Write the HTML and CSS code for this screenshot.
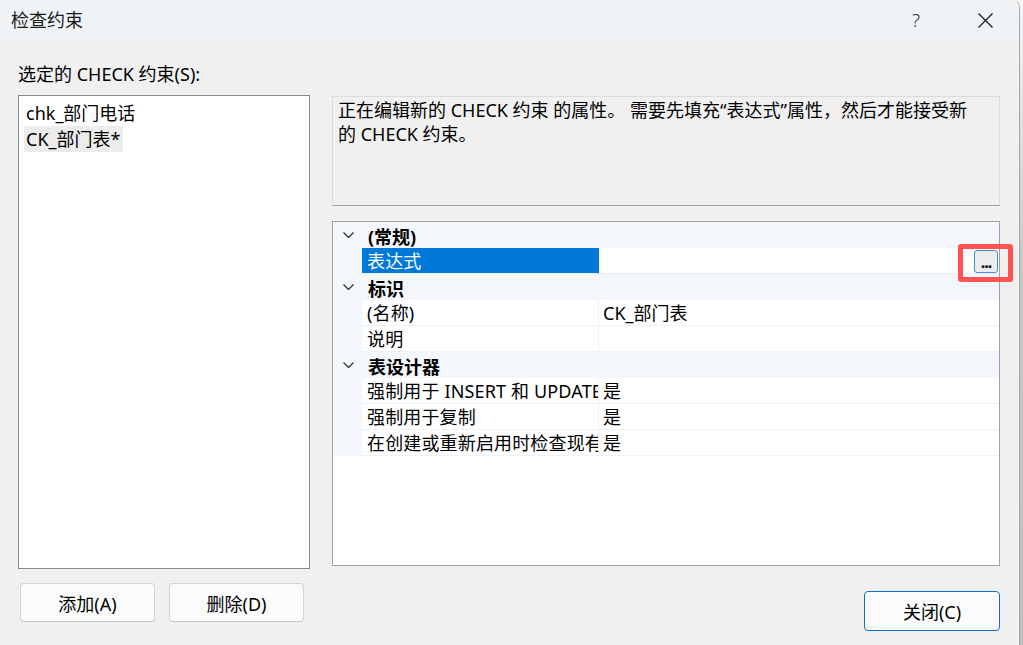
FILE: index.html
```html
<!DOCTYPE html>
<html lang="zh-CN">
<head>
<meta charset="utf-8">
<title>检查约束</title>
<link rel="stylesheet" href="styles.css">
</head>
<body>
<div class="window">
  <div class="titlebar">
    <span class="title">检查约束</span>
    <span class="tb-btn help">?</span>
    <span class="tb-btn close">
      <svg width="15" height="15" viewBox="0 0 15 15"><path d="M0.5 0.5 L14.5 14.5 M14.5 0.5 L0.5 14.5" stroke="#1a1a1a" stroke-width="1.3" fill="none"/></svg>
    </span>
  </div>
  <div class="content">
    <div class="left">
      <div class="label">选定的 CHECK 约束(S):</div>
      <div class="list">
        <div class="item">chk_部门电话</div>
        <div class="item sel">CK_部门表*</div>
      </div>
      <div class="btnrow">
        <button class="btn">添加(A)</button>
        <button class="btn">删除(D)</button>
      </div>
    </div>
    <div class="right">
      <div class="desc">正在编辑新的 CHECK 约束 的属性。 需要先填充“表达式”属性，然后才能接受新<br>的 CHECK 约束。</div>
      <div class="grid">
        <div class="cat">
          <svg class="chev" width="11" height="6" viewBox="0 0 11 6"><polyline points="0.5,0.5 5.5,5.5 10.5,0.5" stroke="#333" stroke-width="1.3" fill="none"/></svg>
          <span class="cat-name">(常规)</span>
        </div>
        <div class="prop">
          <div class="gutter"></div>
          <div class="name selected">表达式</div>
          <div class="value"><span class="ellipsis">...</span></div>
        </div>
        <div class="cat">
          <svg class="chev" width="11" height="6" viewBox="0 0 11 6"><polyline points="0.5,0.5 5.5,5.5 10.5,0.5" stroke="#333" stroke-width="1.3" fill="none"/></svg>
          <span class="cat-name">标识</span>
        </div>
        <div class="prop">
          <div class="gutter"></div>
          <div class="name">(名称)</div>
          <div class="value">CK_部门表</div>
        </div>
        <div class="prop">
          <div class="gutter"></div>
          <div class="name">说明</div>
          <div class="value"></div>
        </div>
        <div class="cat">
          <svg class="chev" width="11" height="6" viewBox="0 0 11 6"><polyline points="0.5,0.5 5.5,5.5 10.5,0.5" stroke="#333" stroke-width="1.3" fill="none"/></svg>
          <span class="cat-name">表设计器</span>
        </div>
        <div class="prop">
          <div class="gutter"></div>
          <div class="name">强制用于 INSERT 和 UPDATE</div>
          <div class="value">是</div>
        </div>
        <div class="prop">
          <div class="gutter"></div>
          <div class="name">强制用于复制</div>
          <div class="value">是</div>
        </div>
        <div class="prop">
          <div class="gutter"></div>
          <div class="name">在创建或重新启用时检查现有数据</div>
          <div class="value">是</div>
        </div>
        <div class="highlight"></div>
      </div>
      <div class="closerow">
        <button class="btn default">关闭(C)</button>
      </div>
    </div>
  </div>
</div>
</body>
</html>
```
FILE: styles.css
```css
* { box-sizing: border-box; }
html, body {
  margin: 0;
  padding: 0;
}
body {
  width: 1023px;
  height: 645px;
  overflow: hidden;
  background: linear-gradient(to bottom, #f6f6f6 0%, #c9c9c9 40%, #bdbdbd 100%);
  font-family: "Noto Sans", "Noto Sans CJK SC", sans-serif;
  font-size: 18px;
  color: #000;
}
.window {
  width: 1020px;
  height: 645px;
  background: #f0f0f0;
  border-right: 1px solid #a9a9a9;
  border-top-right-radius: 8px;
  overflow: hidden;
}
.titlebar {
  height: 40px;
  background: #eff3f5;
  display: flex;
  align-items: center;
  padding: 0 11px 0 11px;
}
.title {
  font-size: 18px;
  line-height: 24px;
  color: #1a1a1a;
}
.tb-btn {
  width: 46px;
  height: 40px;
  display: flex;
  align-items: center;
  justify-content: center;
}
.help {
  margin-left: auto;
  font-size: 19px;
  color: #333;
  font-weight: 300;
}
.close {
  margin-left: 23px;
}
.content {
  display: flex;
  gap: 22px;
  padding: 22px 0 0 18px;
}
.left {
  width: 292px;
}
.label {
  line-height: 24px;
  height: 24px;
  white-space: nowrap;
}
.list {
  margin-top: 9px;
  height: 474px;
  background: #fff;
  border: 1px solid #8a8a8a;
  padding: 4px 5px;
}
.item {
  width: fit-content;
  line-height: 26px;
  height: 26px;
  padding: 0 3px 0 2px;
  white-space: nowrap;
}
.item.sel {
  background: #ececec;
}
.btnrow {
  display: flex;
  gap: 14px;
  margin-top: 14px;
  padding-left: 2px;
}
.btn {
  width: 135px;
  height: 39px;
  background: #fbfbfb;
  border: 1px solid #d3d3d3;
  border-bottom-color: #c2c2c2;
  border-radius: 4px;
  font-family: "Noto Sans", "Noto Sans CJK SC", sans-serif;
  font-size: 18px;
  color: #000;
  padding: 0;
}
.right {
  width: 668px;
  margin-top: 34px;
}
.desc {
  height: 110px;
  background: #f0f0f0;
  border: 1px solid #dcdcdc;
  border-bottom-color: #a0a0a0;
  padding: 1px 5px;
  line-height: 24px;
  white-space: nowrap;
}
.grid {
  position: relative;
  margin-top: 15px;
  height: 345px;
  background: #fff;
  border: 1px solid #a0a0a0;
}
.cat {
  height: 26px;
  display: flex;
  align-items: center;
  background: #f3f6fa;
  padding-left: 10px;
}
.chev {
  display: block;
  margin-top: 0;
}
.cat-name {
  margin-left: 14px;
  font-weight: 700;
  line-height: 26px;
  padding-top: 3px;
}
.prop {
  height: 26px;
  display: flex;
}
.gutter {
  width: 29px;
  background: #f3f6fa;
}
.name {
  width: 237px;
  padding: 2px 0 0 5px;
  line-height: 23px;
  border-right: 1px solid #eef1f5;
  border-bottom: 1px solid #eef1f5;
  white-space: nowrap;
  overflow: hidden;
  text-overflow: clip;
  letter-spacing: 0.15px;
}
.name.selected {
  background: #0078d7;
  color: #fff;
  border-right-color: #0078d7;
}
.value {
  flex: 1;
  position: relative;
  padding: 2px 0 0 4px;
  line-height: 23px;
  border-bottom: 1px solid #eef1f5;
  white-space: nowrap;
}
.ellipsis {
  position: absolute;
  right: 1px;
  top: 2px;
  width: 24px;
  height: 23px;
  background: #ececec;
  border: 1px solid #3d8fdc;
  border-radius: 3px;
  font-size: 16px;
  font-weight: 700;
  line-height: 22px;
  text-align: center;
  color: #000;
  letter-spacing: -1px;
  padding-top: 0;
}
.highlight {
  position: absolute;
  left: 625px;
  top: 22px;
  width: 55px;
  height: 38px;
  border: 5px solid #fd5353;
  border-radius: 3px;
}
.closerow {
  display: flex;
  justify-content: flex-end;
  margin-top: 25px;
}
.btn.default {
  width: 136px;
  height: 40px;
  border: 1px solid #0a6fc8;
}
```
